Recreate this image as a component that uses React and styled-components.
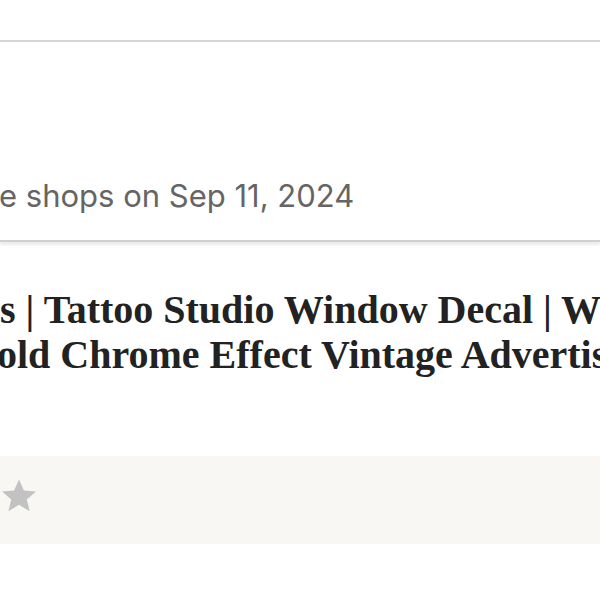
import React from "react";
import styled, { createGlobalStyle } from "styled-components";

const Global = createGlobalStyle`
  html, body { margin: 0; padding: 0; background: #ffffff; }
  body { width: 600px; height: 600px; overflow: hidden; }
`;

const Page = styled.div`
  width: 600px;
  height: 600px;
  overflow: hidden;
  display: flex;
  flex-direction: column;
  background: #ffffff;
`;

const TopGap = styled.div`
  height: 40px;
  flex: none;
`;

const Card = styled.section`
  flex: none;
  box-sizing: border-box;
  height: 202px;
  border-top: 2px solid #d6d6d6;
  border-bottom: 2px solid #d0d0d0;
  box-shadow: 0 3px 2px #ececec;
  display: flex;
  align-items: flex-end;
  padding-bottom: 25px;
`;

const Meta = styled.p`
  margin: 0 0 0 -1px;
  font-family: Inter, "Noto Sans", sans-serif;
  font-size: 31px;
  line-height: 38px;
  color: #656565;
  white-space: nowrap;
`;

const Title = styled.h1`
  margin: 45px 0 0 0;
  font-family: "Liberation Serif", "DejaVu Serif", serif;
  font-weight: 700;
  font-size: 40px;
  line-height: 45px;
  color: #222222;
`;

const TitleLine = styled.span`
  display: block;
  white-space: nowrap;
  margin-left: ${(p) => p.$shift || 0}px;
`;

const RatingBand = styled.div`
  margin-top: 79px;
  height: 88px;
  background: #f8f7f3;
  display: flex;
  align-items: center;
  padding: 0 0 8px 0;
  box-sizing: border-box;
`;

const Star = styled.svg`
  width: 38px;
  height: 38px;
  fill: #c2c2c2;
  flex: none;
`;

export default function App() {
  return (
    <>
      <Global />
      <Page>
        <TopGap />
        <Card>
          <Meta>e shops on Sep 11, 2024</Meta>
        </Card>
        <Title>
          <TitleLine>s | Tattoo Studio Window Decal | Wall</TitleLine>
          <TitleLine $shift={-3}>old Chrome Effect Vintage Advertising</TitleLine>
        </Title>
        <RatingBand>
          <Star viewBox="0 0 24 24">
            <path d="M12 1.5l3.1 7.1 7.6.6-5.8 5 1.8 7.4L12 17.6l-6.7 4 1.8-7.4-5.8-5 7.6-.6z" />
          </Star>
        </RatingBand>
      </Page>
    </>
  );
}
